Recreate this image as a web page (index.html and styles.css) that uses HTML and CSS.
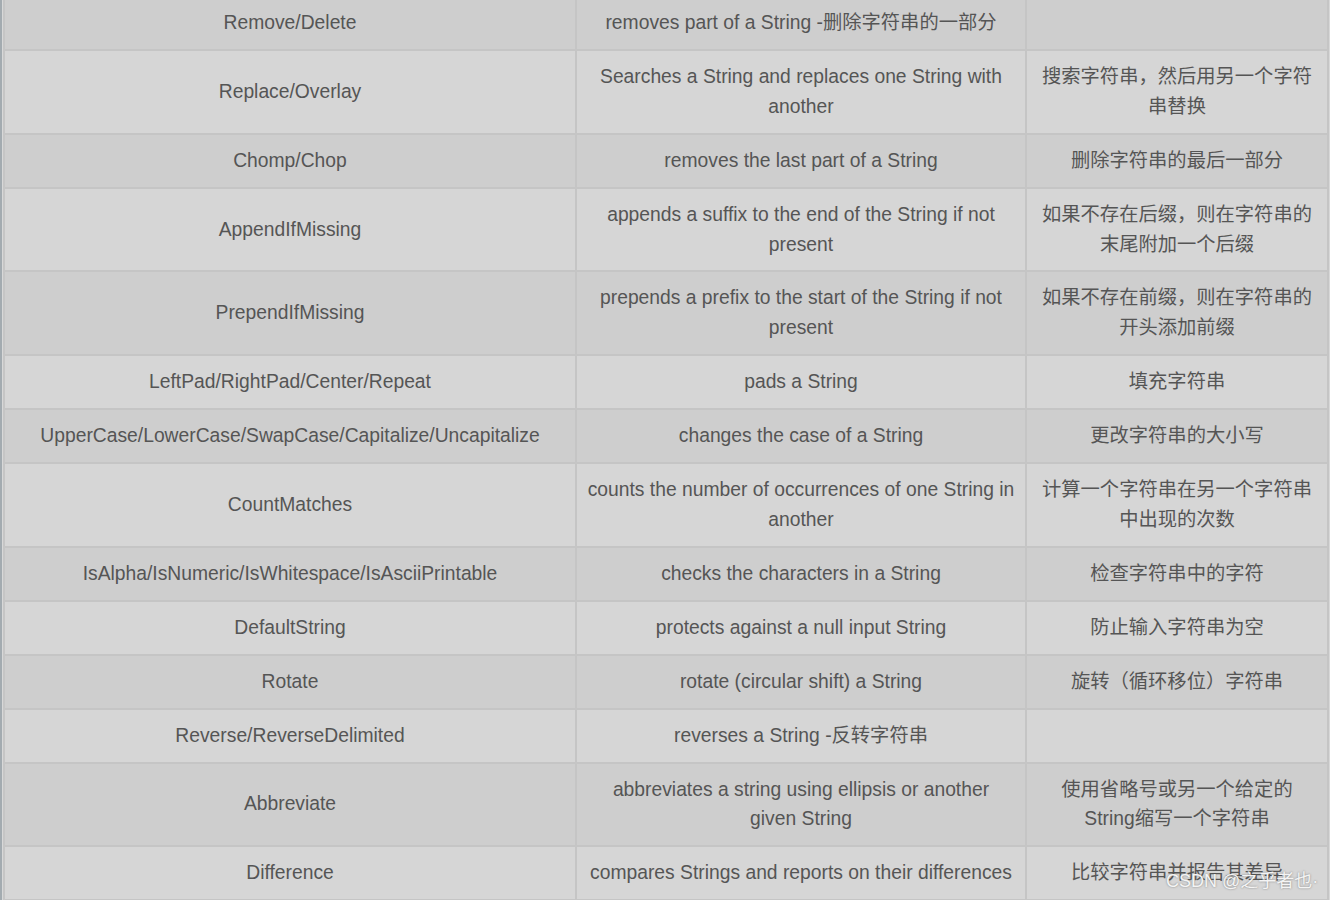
FILE: index.html
```html
<!DOCTYPE html>
<html lang="zh">
<head>
<meta charset="utf-8">
<title>StringUtils</title>
<link rel="stylesheet" href="styles.css">
</head>
<body>
<div class="page">
  <table class="tbl">
    <colgroup>
      <col class="c1"><col class="c2"><col class="c3">
    </colgroup>
    <tbody>
      <tr><td>Remove/Delete</td><td>removes part of a String -删除字符串的一部分</td><td></td></tr>
      <tr><td>Replace/Overlay</td><td>Searches a String and replaces one String with another</td><td>搜索字符串，然后用另一个字符串替换</td></tr>
      <tr><td>Chomp/Chop</td><td>removes the last part of a String</td><td>删除字符串的最后一部分</td></tr>
      <tr><td>AppendIfMissing</td><td>appends a suffix to the end of the String if not present</td><td>如果不存在后缀，则在字符串的末尾附加一个后缀</td></tr>
      <tr><td>PrependIfMissing</td><td>prepends a prefix to the start of the String if not present</td><td>如果不存在前缀，则在字符串的开头添加前缀</td></tr>
      <tr><td>LeftPad/RightPad/Center/Repeat</td><td>pads a String</td><td>填充字符串</td></tr>
      <tr><td>UpperCase/LowerCase/SwapCase/Capitalize/Uncapitalize</td><td>changes the case of a String</td><td>更改字符串的大小写</td></tr>
      <tr><td>CountMatches</td><td>counts the number of occurrences of one String in another</td><td>计算一个字符串在另一个字符串中出现的次数</td></tr>
      <tr><td>IsAlpha/IsNumeric/IsWhitespace/IsAsciiPrintable</td><td>checks the characters in a String</td><td>检查字符串中的字符</td></tr>
      <tr><td>DefaultString</td><td>protects against a null input String</td><td>防止输入字符串为空</td></tr>
      <tr><td>Rotate</td><td>rotate (circular shift) a String</td><td>旋转（循环移位）字符串</td></tr>
      <tr><td>Reverse/ReverseDelimited</td><td>reverses a String -反转字符串</td><td></td></tr>
      <tr><td>Abbreviate</td><td>abbreviates a string using ellipsis or another given&nbsp;String</td><td>使用省略号或另一个给定的String缩写一个字符串</td></tr>
      <tr><td>Difference</td><td>compares Strings and reports on their differences</td><td>比较字符串并报告其差异</td></tr>
    </tbody>
  </table>
  <div class="watermark">CSDN @之乎者也·</div>
</div>
</body>
</html>
```

FILE: styles.css
```css
html, body {
  margin: 0;
  padding: 0;
  background: #d8d8d8;
  overflow: hidden;
}
.page {
  position: relative;
  width: 1330px;
  height: 900px;
  overflow: hidden;
  box-sizing: border-box;
  border-left: 2px solid #a3abb0;
  padding-left: 1px;
}
.tbl {
  margin-top: -5px;
  border-collapse: collapse;
  table-layout: fixed;
  width: 1324px;
  font-family: "Liberation Sans", Arial, "Noto Sans CJK SC", sans-serif;
  font-size: 19.3px;
  line-height: 29.9px;
  color: #555555;
}
.c1 { width: 572px; }
.c2 { width: 450px; }
.c3 { width: 302px; }
.tbl td {
  border: 2px solid #c5c5c5;
  padding: 11px 10px;
  text-align: center;
  vertical-align: middle;
  background: #d6d6d6;
}
.tbl tr:nth-child(odd) td {
  background: #cecece;
}
.watermark {
  position: absolute;
  left: 1164px;
  top: 867px;
  font-family: "Liberation Sans", "Noto Sans CJK SC", sans-serif;
  font-size: 18px;
  line-height: 28px;
  color: #f4f4f4;
  text-shadow: 0 0 2px rgba(60, 60, 60, 0.6);
}
```
